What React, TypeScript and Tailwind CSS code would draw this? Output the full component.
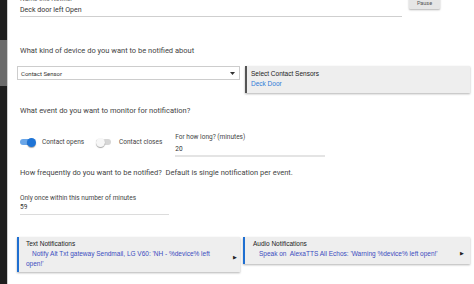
import { ChevronDown } from "lucide-react";

function Toggle({ on }: { on: boolean }) {
  return (
    <div className="relative flex h-[10px] w-[16px] items-center">
      <div className={["h-[6px] w-[15px] rounded-full", on ? "bg-[#6aa6e8]" : "bg-[#d6d6d6]"].join(" ")} />
      <div
        className={[
          "absolute top-[1px] h-[9px] w-[9px] rounded-full shadow-[0_1px_1px_rgba(0,0,0,0.35)]",
          on ? "right-0 bg-[#1e74d6]" : "left-0 bg-[#f7f7f7]",
        ].join(" ")}
      />
    </div>
  );
}

function Card({ title, children, accent, className }: { title: string; children: React.ReactNode; accent: string; className?: string }) {
  return (
    <div
      className={[
        "relative bg-[#eeeeee] border-l-2 shadow-[0_1px_2px_rgba(0,0,0,0.3)] font-['Liberation_Sans',Arial,sans-serif] text-[6.5px] leading-[10px]",
        accent,
        className ?? "",
      ].join(" ")}
    >
      <div className="text-[#222]">{title}</div>
      {children}
    </div>
  );
}

export default function App() {
  return (
    <div className="flex h-[284px] w-[474px] overflow-hidden bg-white font-['Roboto',sans-serif] text-[#444]">
      {/* dark edge of the window behind */}
      <div className="flex w-[8px] flex-col border-r border-[#d0d0d0]">
        <div className="h-[40px] bg-[#1e1e1e]" />
        <div className="h-[46px] bg-[#6b6b6b]" />
        <div className="flex-1 bg-[#1e1e1e]" />
      </div>

      <div className="flex-1 pl-[12px] pr-[4px]">
        {/* name row */}
        <div className="flex items-start">
          <div className="w-[382px] border-b border-[#cfcfcf] pb-[1px]">
            <div className="-mt-[4px] text-[6.5px] leading-[7px] text-[#666]">Name this Notifier</div>
            <div className="mt-[3px] text-[7px] leading-[9px] text-[#333]">Deck door left Open</div>
          </div>
          <div className="-mt-[3px] ml-[7px] flex h-[12px] w-[31px] items-center justify-center rounded-[1px] bg-[#e6e6e6] text-[5.5px] text-[#555] shadow-[0_1px_2px_rgba(0,0,0,0.3)]">
            Pause
          </div>
        </div>

        <div className="mt-[29px] text-[7.5px] leading-[10px]">What kind of device do you want to be notified about</div>

        {/* device row */}
        <div className="-ml-[3px] mt-[10px] flex items-start">
          <div className="flex h-[14px] w-[223px] items-center justify-between border border-[#cdcdcd] pl-[3px] pr-[4px] text-[6px] text-[#333]">
            <span>Contact Sensor</span>
            <svg width="5" height="3" viewBox="0 0 5 3"><path d="M0 0h5L2.5 3z" fill="#333" /></svg>
          </div>
          <Card title="Select Contact Sensors" accent="border-[#555]" className="ml-[5px] h-[27px] w-[225px] pl-[4px] pt-[3px]">
            <div className="text-[#2f7bd8]">Deck Door</div>
          </Card>
        </div>

        <div className="mt-[13px] text-[7.5px] leading-[10px]">What event do you want to monitor for notification?</div>

        {/* event row */}
        <div className="mt-[12px] flex items-start">
          <div className="mt-[9px] flex items-center text-[6.5px] leading-[10px]">
            <Toggle on />
            <span className="ml-[6px]">Contact opens</span>
            <div className="ml-[12px]">
              <Toggle on={false} />
            </div>
            <span className="ml-[7px]">Contact closes</span>
          </div>
          <div className="ml-[13px] mt-[4px] w-[150px] border-b-2 border-[#e4e4e4] text-[6.5px] leading-[10px]">
            <div>For how long? (minutes)</div>
            <div className="mt-[2px] pb-[1px] text-[#333]">20</div>
          </div>
        </div>

        <div className="mt-[11px] text-[7.5px] leading-[10px]">
          How frequently do you want to be notified?&nbsp; Default is single notification per event.
        </div>

        <div className="mt-[16px] w-[149px] border-b border-[#dcdcdc] text-[6.5px] leading-[9px]">
          <div>Only once within this number of minutes</div>
          <div className="pb-[2px] text-[#333]">59</div>
        </div>

        {/* notifications */}
        <div className="-ml-[3px] mt-[22px] flex items-start">
          <Card title="Text Notifications" accent="border-[#1f6fd1]" className="h-[35px] w-[223px] pl-[7px] pr-[14px] pt-[2px]">
            <div className="text-[#3b4cc0]">
              <span className="pl-[6px]">Notify Alt Txt gateway Sendmail, LG V60: 'NH - %device% left</span>
              <br />
              open!'
            </div>
            <span className="absolute right-[3px] top-[15px] text-[5px] text-[#222]">▶</span>
          </Card>
          <Card title="Audio Notifications" accent="border-[#1f6fd1]" className="ml-[3px] h-[27px] w-[227px] pl-[8px] pt-[2px]">
            <div className="pl-[6px] text-[#3b4cc0]">Speak on&nbsp; AlexaTTS All Echos: 'Warning %device% left open!'</div>
            <span className="absolute right-[6px] top-[11px] text-[5px] text-[#222]">▶</span>
          </Card>
        </div>
      </div>
    </div>
  );
}
